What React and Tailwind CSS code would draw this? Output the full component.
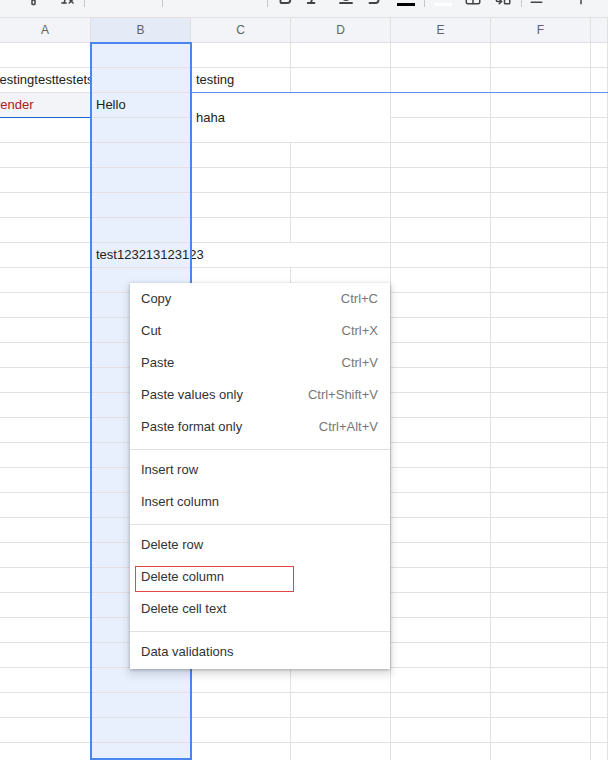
import { Bold, Italic, Underline, Strikethrough, Grid2x2, Combine, PaintRoller, RemoveFormatting, AlignLeft, ArrowUpToLine, Highlighter } from "lucide-react";

const COLS = ["A", "B", "C", "D", "E", "F", ""];
const ROWS = 29;

const menuGroups = [
  [
    ["Copy", "Ctrl+C"],
    ["Cut", "Ctrl+X"],
    ["Paste", "Ctrl+V"],
    ["Paste values only", "Ctrl+Shift+V"],
    ["Paste format only", "Ctrl+Alt+V"],
  ],
  [["Insert row"], ["Insert column"]],
  [["Delete row"], ["Delete column", null, true], ["Delete cell text"]],
  [["Data validations"]],
];

function Sep({ className = "" }) {
  return <div className={`w-px h-[20px] bg-[#c7c7c7] ${className}`} />;
}

function Toolbar() {
  const icon = "w-[18px] h-[18px] text-[#444]";
  return (
    <div className="h-[18px] overflow-hidden bg-[#f4f5f7] border-b border-[#e0e0e0]">
      <div className="flex items-center h-[40px] -mt-[23px] text-[13px] text-[#222]">
        <PaintRoller className={`${icon} ml-[26px]`} strokeWidth={2} />
        <RemoveFormatting className={`${icon} ml-[14px]`} strokeWidth={2} />
        <Sep className="ml-[8px]" />
        <span className="ml-[12px] w-[42px] -translate-y-[2px]">Normal</span>
        <Sep className="ml-[23px]" />
        <span className="ml-[9px] w-[27px] -translate-y-[2px]">Arial</span>
        <span className="ml-[32px] w-[12px] -translate-y-[2px]">10</span>
        <Sep className="ml-[24px]" />
        <Bold className={`${icon} ml-[8px]`} strokeWidth={2.5} />
        <Italic className={`${icon} ml-[10px]`} strokeWidth={2.5} />
        <Underline className={`${icon} ml-[15px]`} strokeWidth={2.5} />
        <Strikethrough className={`${icon} ml-[10px]`} strokeWidth={2.5} />
        <div className="ml-[14px] w-[18px] h-[18px] flex flex-col items-center">
          <span className="text-[13px] leading-[12px] font-bold text-[#444]">A</span>
          <div className="mt-[3px] w-[18px] h-[3px] bg-black" />
        </div>
        <Sep className="ml-[9px]" />
        <div className="ml-[9px] w-[18px] h-[18px] flex flex-col items-center">
          <Highlighter className="w-[12px] h-[12px] text-[#444]" />
          <div className="mt-[3px] w-[18px] h-[3px] bg-white" />
        </div>
        <Grid2x2 className={`${icon} ml-[12px]`} strokeWidth={2} />
        <Combine className={`${icon} ml-[12px]`} strokeWidth={2} />
        <Sep className="ml-[9px]" />
        <AlignLeft className={`${icon} ml-[7px]`} strokeWidth={2} />
        <ArrowUpToLine className={`${icon} ml-[25px]`} strokeWidth={2} />
      </div>
    </div>
  );
}

function Cell({ col, children, className = "" }) {
  const bg = col === 1 ? "bg-[#e8f0fe]" : "bg-white";
  return (
    <div className={`h-[25px] border-b border-r border-[#e2e2e2] flex items-center text-[13px] text-[#222] whitespace-nowrap ${bg} ${className}`}>
      {children}
    </div>
  );
}

function Body() {
  const cells = [];
  for (let r = 1; r <= ROWS; r++) {
    for (let c = 0; c < 7; c++) {
      const key = `${r}-${c}`;
      if ((r === 3 || r === 4) && (c === 2 || c === 3)) {
        if (r === 3 && c === 2) {
          cells.push(
            <div key={key} className="col-span-2 row-span-2 h-[50px] border-b border-r border-[#e2e2e2] bg-white flex items-center pl-[5px] text-[13px] text-[#222]">
              haha
            </div>
          );
        }
        continue;
      }
      if (r === 9 && c === 3) continue;
      if (r === 9 && c === 2) {
        cells.push(<div key={key} className="col-span-2 h-[25px] border-b border-r border-[#e2e2e2] bg-white" />);
        continue;
      }
      if (r === 2 && c === 0) {
        cells.push(
          <Cell key={key} col={c} className="overflow-hidden">
            <span className="-ml-[4px]">testingtesttestetsting</span>
          </Cell>
        );
        continue;
      }
      if (r === 3 && c === 0) {
        cells.push(
          <Cell key={key} col={c} className="overflow-hidden !bg-[#f3f4f8] !border-b-[#1a66d2]">
            <span className="-ml-[4px] text-[#a8201a]">render</span>
          </Cell>
        );
        continue;
      }
      if (r === 2 && c === 2) {
        cells.push(<Cell key={key} col={c} className="pl-[5px]">testing</Cell>);
        continue;
      }
      if (r === 3 && c === 1) {
        cells.push(<Cell key={key} col={c} className="pl-[5px]">Hello</Cell>);
        continue;
      }
      if (r === 9 && c === 1) {
        cells.push(
          <Cell key={key} col={c} className="pl-[5px] overflow-visible relative z-10">
            test123213123123
          </Cell>
        );
        continue;
      }
      cells.push(<Cell key={key} col={c} />);
    }
  }
  return (
    <div className="grid grid-cols-[91px_100px_100px_100px_100px_100px_1fr] auto-rows-[25px]">
      {cells}
    </div>
  );
}

function ContextMenu() {
  return (
    <div className="absolute z-30 left-[130px] top-[283px] w-[260px] bg-white pb-px shadow-[0_1px_3px_rgba(0,0,0,0.25),0_4px_8px_2px_rgba(0,0,0,0.12)] text-[13px]">
      {menuGroups.map((group, gi) => (
        <div key={gi}>
          {gi > 0 && <div className="mt-[6px] mb-[4px] h-px bg-[#e0e0e0]" />}
          {group.map(([label, shortcut, focused]) => (
            <div key={label} className="relative h-[32px] flex items-center justify-between pl-[11px] pr-[12px]">
              <span className="text-[#333]">{label}</span>
              {shortcut && <span className="text-[#777]">{shortcut}</span>}
              {focused && (
                <div className="absolute left-[5px] top-[5px] w-[159px] h-[26px] border border-[#e04646]" />
              )}
            </div>
          ))}
        </div>
      ))}
    </div>
  );
}

export default function App() {
  return (
    <div
      className="relative w-[608px] h-[760px] overflow-hidden bg-white"
      style={{ fontFamily: '"Liberation Sans", Arial, sans-serif' }}
    >
      <Toolbar />

      {/* column headers */}
      <div className="grid grid-cols-[91px_100px_100px_100px_100px_100px_1fr] h-[25px] bg-[#f3f4f7] text-[12px] text-[#5f6368]">
        {COLS.map((c, i) => (
          <div
            key={i}
            className={`flex items-center justify-center border-r border-b border-[#e0e0e0] ${i === 1 ? "bg-[#e4ebf7]" : ""}`}
          >
            {c}
          </div>
        ))}
      </div>

      <Body />

      {/* column selection + row highlight */}
      <div className="absolute left-[90px] top-[42px] w-[102px] bottom-0 border-2 border-[#4a86f0] pointer-events-none z-20" />
      <div className="absolute left-[191px] right-0 top-[92px] h-px bg-[#5a90f0] z-20" />

      <ContextMenu />
    </div>
  );
}
